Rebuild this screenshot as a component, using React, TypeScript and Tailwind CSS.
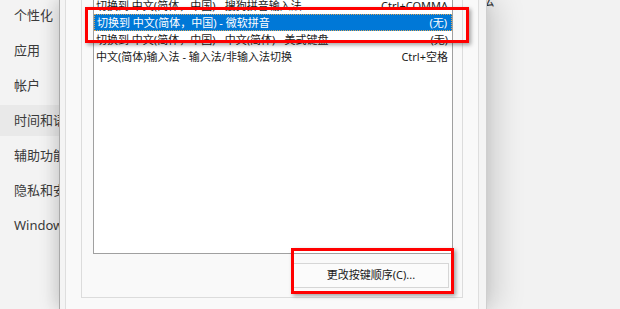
import React from "react";

const font = { fontFamily: '"Noto Sans", "Noto Sans CJK SC", sans-serif' };

const navItems = ["个性化", "应用", "帐户", "时间和语言", "辅助功能", "隐私和安全性", "Windows 更新"];

const rows: { left: string; right: string; selected?: boolean }[] = [
  { left: "切换到 中文(简体，中国) - 搜狗拼音输入法", right: "Ctrl+COMMA" },
  { left: "切换到 中文(简体，中国) - 微软拼音", right: "(无)", selected: true },
  { left: "切换到 中文(简体，中国) - 中文(简体) - 美式键盘", right: "(无)" },
  { left: "中文(简体)输入法 - 输入法/非输入法切换", right: "Ctrl+空格" },
];

export default function App() {
  return (
    <div
      className="relative w-[620px] h-[309px] overflow-hidden bg-[#f3f3f3] flex"
      style={font}
    >
      {/* settings sidebar */}
      <div className="w-[59px] shrink-0 overflow-hidden flex flex-col gap-[4px]">
        {navItems.map((n, i) => (
          <div
            key={n}
            className={
              "h-[31px] shrink-0 flex items-center pl-[14px] whitespace-nowrap text-[13px] text-[#3a3a3a] " +
              (i === 3 ? "bg-[#e9e9e9]" : "")
            }
          >
            {n}
          </div>
        ))}
      </div>

      {/* dialog */}
      <div className="relative z-10 w-[428px] shrink-0 flex bg-[#f4f4f4] border-l border-r border-l-[#a9a9a9] border-r-[#cfcfcf] pl-[5px] pr-[7px] shadow-[12px_0_26px_rgba(0,0,0,0.13),-4px_0_16px_rgba(0,0,0,0.15)]">
        <div className="flex-1 flex flex-col bg-[#f9f9f9] border-l border-r border-[#dedede] px-[15px]">
          <div className="-mt-[15px] flex flex-col border border-[#dcdcdc] pl-[11px] pr-[9px] pt-[10px] pb-[9px]">
            <div className="h-[258px] bg-white border border-[#a0a0a0] flex flex-col text-[11px] text-[#1a1a1a]">
              {rows.map((r, i) => (
                <div
                  key={i}
                  className={
                    "h-[17px] shrink-0 flex items-center justify-between pl-[2px] pr-[4px] leading-[17px] whitespace-nowrap " +
                    (r.selected
                      ? "bg-[#0078d7] text-white border border-dotted border-[#d9a55a] pl-[1px] pr-[3px]"
                      : "")
                  }
                >
                  <span>{r.left}</span>
                  <span>{r.right}</span>
                </div>
              ))}
            </div>
            <div className="flex justify-end mt-[9px] pr-[4px]">
              <button className="w-[156px] h-[25px] bg-[#fbfbfb] border border-[#d6d6d6] text-[11px] text-[#1a1a1a] flex items-center justify-center">
                更改按键顺序(C)...
              </button>
            </div>
          </div>
        </div>
      </div>

      {/* settings page behind */}
      <div className="flex-1 bg-[#f2f2f2]">
        <div className="-ml-[6px] -mt-[8px] text-[13.5px] leading-[16px] text-[#333]">法</div>
      </div>

      {/* red annotation boxes */}
      <div className="absolute z-20 left-[85px] top-[7px] w-[384px] h-[36px] border-[3px] border-[#ff0000] shadow-[2px_2px_4px_rgba(0,0,0,0.35)]" />
      <div className="absolute z-20 left-[291px] top-[248px] w-[163px] h-[46px] border-[3px] border-[#ff0000] shadow-[2px_2px_4px_rgba(0,0,0,0.35)]" />
    </div>
  );
}
